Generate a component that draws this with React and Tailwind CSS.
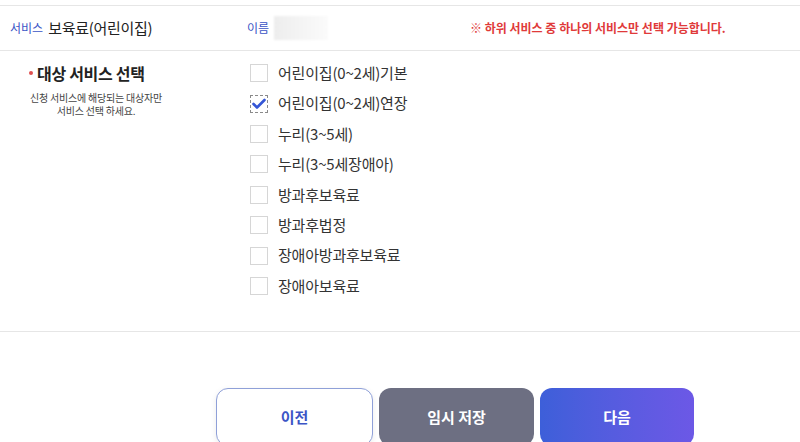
import React, { useState } from "react";

const FONT = { fontFamily: '"Noto Sans CJK KR", "Noto Sans", sans-serif' };

const OPTIONS = [
  "어린이집(0~2세)기본",
  "어린이집(0~2세)연장",
  "누리(3~5세)",
  "누리(3~5세장애아)",
  "방과후보육료",
  "방과후법정",
  "장애아방과후보육료",
  "장애아보육료",
];

const CheckRow = ({ label, checked, onToggle }) => (
  <label className="flex items-center h-[30.4px] cursor-pointer" onClick={onToggle}>
    <span
      className={`w-[18px] h-[18px] flex items-center justify-center bg-white ${
        checked ? "border border-dashed border-[#8a8a8a]" : "border border-[#d6d6d6]"
      }`}
    >
      {checked && (
        <svg width="14" height="12" viewBox="0 0 14 12">
          <path d="M1.5 6 L5 9.5 L12.5 2" fill="none" stroke="#3556d6" strokeWidth="2.6" strokeLinecap="round" strokeLinejoin="round" />
        </svg>
      )}
    </span>
    <span className="ml-[10px] text-[15px] text-[#333] tracking-[-0.2px]">{label}</span>
  </label>
);

export default function App() {
  const [selected, setSelected] = useState(1);

  return (
    <div className="w-full h-[442px] bg-white overflow-hidden" style={FONT}>
      <div className="h-[5px]" />
      {/* 상단 정보 */}
      <div className="flex items-center h-[46px] border-t border-b border-[#e6e6e6]">
        <div className="w-[247px] pl-[10px] flex items-center gap-[5px]">
          <span className="text-[12px] text-[#3b55c6]">서비스</span>
          <span className="text-[15px] text-[#222] tracking-[-0.3px]">보육료(어린이집)</span>
        </div>
        <div className="w-[223px] flex items-center gap-[5px]">
          <span className="text-[12px] text-[#3b55c6]">이름</span>
          <span className="w-[54px] h-[24px] bg-gradient-to-r from-[#ededed] to-[#fbfbfb] blur-[1px]" />
        </div>
        <span className="text-[12px] font-semibold text-[#e03a3a]">
          ※ 하위 서비스 중 하나의 서비스만 선택 가능합니다.
        </span>
      </div>

      {/* 대상 서비스 */}
      <div className="flex h-[281px] border-b border-[#e6e6e6] pt-[7px]">
        <div className="w-[250px]">
          <div className="pl-[29px] flex items-center gap-[4px] h-[30px]">
            <span className="w-[4px] h-[4px] rounded-full bg-[#e05050]" />
            <span className="text-[16px] font-bold text-[#222] tracking-[-0.3px]">대상 서비스 선택</span>
          </div>
          <p className="w-[192px] mt-[3px] text-center text-[10px] leading-[13px] text-[#444] tracking-[-0.2px]">
            신청 서비스에 해당되는 대상자만
            <br />
            서비스 선택 하세요.
          </p>
        </div>
        <div className="flex flex-col">
          {OPTIONS.map((opt, i) => (
            <CheckRow key={opt} label={opt} checked={selected === i} onToggle={() => setSelected(i)} />
          ))}
        </div>
      </div>

      {/* 버튼 */}
      <div className="flex gap-[6px] pl-[216px] pt-[56px]">
        <button className="w-[157px] h-[58px] rounded-[12px] border border-[#8fa0d8] bg-white text-[15px] font-bold text-[#3b55c6] shadow-[0_2px_6px_rgba(0,0,0,0.08)]">
          이전
        </button>
        <button className="w-[155px] h-[58px] rounded-[12px] bg-[#6d6f82] text-[15px] font-bold text-white">
          임시 저장
        </button>
        <button className="w-[154px] h-[58px] rounded-[12px] bg-gradient-to-r from-[#3d5fd9] to-[#6c58e6] text-[15px] font-bold text-white">
          다음
        </button>
      </div>
    </div>
  );
}
